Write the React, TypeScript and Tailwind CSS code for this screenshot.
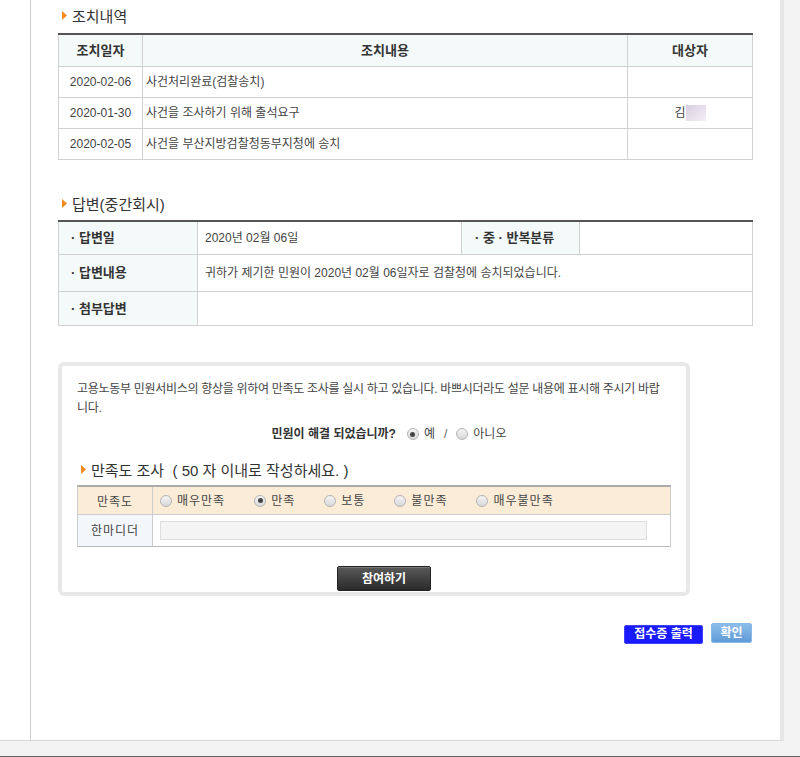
import React from 'react';

const font = { fontFamily: '"Liberation Sans", "Noto Sans CJK KR", sans-serif' };

const actions = [
  { date: '2020-02-06', text: '사건처리완료(검찰송치)', target: '' },
  { date: '2020-01-30', text: '사건을 조사하기 위해 출석요구', target: '김' },
  { date: '2020-02-05', text: '사건을 부산지방검찰청동부지청에 송치', target: '' },
];

const levels = ['매우만족', '만족', '보통', '불만족', '매우불만족'];

const Triangle = () => (
  <svg width="5" height="9" viewBox="0 0 5 9" className="shrink-0">
    <path d="M0 0 L5 4.5 L0 9 Z" fill="#f08a1c" />
  </svg>
);

const Radio = ({ checked }: { checked?: boolean }) => (
  <span className="inline-flex w-[12px] h-[12px] rounded-full border border-[#b5b5b5] bg-gradient-to-b from-[#f4f4f4] to-[#d8d8d8] items-center justify-center shrink-0">
    {checked && <span className="w-[5px] h-[5px] rounded-full bg-[#444]" />}
  </span>
);

const SectionTitle = ({ children }: { children: React.ReactNode }) => (
  <div className="flex items-start gap-[5px] pl-[4px]">
    <span className="mt-[4px]">
      <Triangle />
    </span>
    <span className="text-[15px] leading-[20px] text-[#333]">{children}</span>
  </div>
);

export default function App() {
  return (
    <div className="w-[800px] h-[757px] bg-[#f3f3f3] relative overflow-hidden" style={font}>
      <div className="w-[784px] h-[741px] bg-white border-r-4 border-b border-r-[#e6e6e6] border-b-[#d8d8d8] flex">
        <div className="w-[31px] border-r border-[#cccccc] shrink-0" />
        <div className="pl-[27px] w-[721px]">
          {/* 조치내역 */}
          <div className="pt-[7px] h-[33px]">
            <SectionTitle>조치내역</SectionTitle>
          </div>
          <table className="w-[694px] border-collapse border-t-2 border-t-[#555] text-[#444] table-fixed">
            <colgroup>
              <col className="w-[84px]" />
              <col className="w-[485px]" />
              <col className="w-[125px]" />
            </colgroup>
            <thead>
              <tr className="h-[32px] bg-[#f4fafa]">
                <th className="border border-[#d0d0d0] border-t-0 text-[13px] font-bold text-[#333]">조치일자</th>
                <th className="border border-[#d0d0d0] border-t-0 text-[13px] font-bold text-[#333]">조치내용</th>
                <th className="border border-[#d0d0d0] border-t-0 text-[13px] font-bold text-[#333]">대상자</th>
              </tr>
            </thead>
            <tbody>
              {actions.map((a) => (
                <tr key={a.date} className="h-[31px]">
                  <td className="border border-[#d0d0d0] text-center text-[12px]">{a.date}</td>
                  <td className="border border-[#d0d0d0] pl-[3px] text-[12px]">{a.text}</td>
                  <td className="border border-[#d0d0d0] text-center text-[12px]">
                    {a.target && (
                      <span className="inline-flex items-center">
                        {a.target}
                        <span className="inline-block w-[20px] h-[16px] bg-gradient-to-br from-[#d9cfe0] to-[#f3f0f5]" />
                      </span>
                    )}
                  </td>
                </tr>
              ))}
            </tbody>
          </table>

          {/* 답변 */}
          <div className="pt-[35px] h-[60px]">
            <SectionTitle>답변(중간회시)</SectionTitle>
          </div>
          <table className="w-[694px] border-collapse border-t-2 border-t-[#555] text-[#444] table-fixed">
            <colgroup>
              <col className="w-[139px]" />
              <col className="w-[264px]" />
              <col className="w-[118px]" />
              <col className="w-[173px]" />
            </colgroup>
            <tbody>
              <tr className="h-[34px]">
                <th className="border border-[#d0d0d0] border-t-0 bg-[#f4fafa] text-left pl-[12px] text-[13px] font-bold text-[#333]">· 답변일</th>
                <td className="border border-[#d0d0d0] border-t-0 pl-[7px] text-[12px]">2020년 02월 06일</td>
                <th className="border border-[#d0d0d0] border-t-0 bg-[#f4fafa] text-left pl-[13px] text-[13px] font-bold text-[#333]">· 중 · 반복분류</th>
                <td className="border border-[#d0d0d0] border-t-0" />
              </tr>
              <tr className="h-[37px]">
                <th className="border border-[#d0d0d0] bg-[#f4fafa] text-left pl-[12px] text-[13px] font-bold text-[#333]">· 답변내용</th>
                <td colSpan={3} className="border border-[#d0d0d0] pl-[7px] text-[12px]">
                  귀하가 제기한 민원이 2020년 02월 06일자로 검찰청에 송치되었습니다.
                </td>
              </tr>
              <tr className="h-[34px]">
                <th className="border border-[#d0d0d0] bg-[#f4fafa] text-left pl-[12px] text-[13px] font-bold text-[#333]">· 첨부답변</th>
                <td colSpan={3} className="border border-[#d0d0d0]" />
              </tr>
            </tbody>
          </table>

          {/* 만족도 조사 */}
          <div className="mt-[36px] w-[632px] h-[234px] border-4 border-[#e8e8e8] rounded-[6px] px-[15px] pt-[14px]">
            <p className="text-[12px] leading-[19px] text-[#444] tracking-[-0.3px]">
              <span className="whitespace-nowrap">
                고용노동부 민원서비스의 향상을 위하여 만족도 조사를 실시 하고 있습니다. 바쁘시더라도 설문 내용에 표시해 주시기 바랍
              </span>
              <br />
              니다.
            </p>
            <div className="flex items-center justify-center gap-[5px] mt-[7px] text-[12px] text-[#444] pl-[30px]">
              <span className="font-bold text-[#333] mr-[6px]">민원이 해결 되었습니까?</span>
              <Radio checked />
              <span>예</span>
              <span className="px-[4px] text-[#666]">/</span>
              <Radio />
              <span>아니오</span>
            </div>
            <div className="mt-[18px] h-[24px]">
              <SectionTitle>만족도 조사 &nbsp;( 50 자 이내로 작성하세요. )</SectionTitle>
            </div>
            <div className="border-t-2 border-[#aaaaaa] border-x border-x-[#cccccc] border-b border-b-[#bbbbbb]">
              <div className="flex h-[28px] bg-[#fbecd8] border-b border-[#cccccc]">
                <div className="w-[75px] border-r border-[#cccccc] flex items-center justify-center text-[12px] text-[#444] tracking-[1px] pt-[2px]">
                  만족도
                </div>
                <div className="flex items-center gap-[29px] pl-[7px] text-[12px] text-[#444] tracking-[1px]">
                  {levels.map((l) => (
                    <span key={l} className="flex items-center gap-[5px]">
                      <Radio checked={l === '만족'} />
                      {l}
                    </span>
                  ))}
                </div>
              </div>
              <div className="flex h-[31px]">
                <div className="w-[75px] border-r border-[#cccccc] bg-[#f3f7fc] flex items-center justify-center text-[12px] text-[#444] tracking-[1px]">
                  한마디더
                </div>
                <div className="flex items-center pl-[7px]">
                  <div className="w-[487px] h-[19px] bg-[#f4f4f4] border border-[#dddddd]" />
                </div>
              </div>
            </div>
            <div className="flex justify-center mt-[19px] pl-[20px]">
              <button className="w-[94px] h-[25px] rounded-[2px] border border-[#222] bg-gradient-to-b from-[#5a5a5a] to-[#2a2a2a] text-white text-[12px] font-bold shadow-[inset_0_1px_0_#777]">
                참여하기
              </button>
            </div>
          </div>

          {/* 하단 버튼 */}
          <div className="flex justify-end items-start gap-[8px] mt-[27px] w-[694px]">
            <button className="mt-[2px] w-[79px] h-[19px] rounded-[2px] border border-[#4040ff] bg-[#1a1aff] text-white text-[12px] font-bold leading-[17px]">
              접수증 출력
            </button>
            <button className="w-[41px] h-[20px] rounded-[2px] border border-[#8ab8e6] bg-gradient-to-b from-[#8cbde9] to-[#5f9bd6] text-white text-[12px] font-bold leading-[18px]">
              확인
            </button>
          </div>
        </div>
      </div>
      <div className="absolute left-0 right-0 bottom-0 h-[1px] bg-[#666]" />
    </div>
  );
}
